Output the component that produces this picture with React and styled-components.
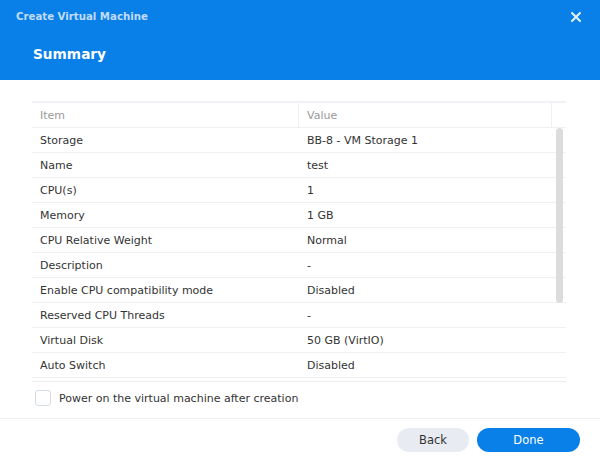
import styled, { createGlobalStyle } from "styled-components";

const Global = createGlobalStyle`
  html, body {
    margin: 0;
    padding: 0;
    background: #fff;
  }
  body {
    font-family: "DejaVu Sans", Verdana, sans-serif;
    font-size: 11px;
    color: #333;
  }
`;

const Dialog = styled.div`
  width: 600px;
  height: 458px;
  display: flex;
  flex-direction: column;
  background: #fff;
  overflow: hidden;
`;

const Header = styled.header`
  height: 80px;
  background: #0880e8;
  display: flex;
  flex-direction: column;
  box-sizing: border-box;
`;

const TitleBar = styled.div`
  display: flex;
  align-items: center;
  justify-content: space-between;
  height: 33px;
  padding: 0 18px 0 16px;
`;

const Title = styled.div`
  font-size: 10.2px;
  font-weight: bold;
  color: #c2dbf8;
`;

const Close = styled.button`
  border: 0;
  background: none;
  padding: 0;
  width: 12px;
  height: 12px;
  display: flex;
  cursor: pointer;
`;

const Heading = styled.h1`
  margin: 0;
  padding: 13px 0 0 33px;
  font-size: 13.7px;
  font-weight: bold;
  color: #fff;
`;

const Body = styled.div`
  flex: 1;
  padding: 21px 34px 0 32px;
  display: flex;
  flex-direction: column;
`;

const Grid = styled.div`
  position: relative;
  border-top: 2px solid #f0f2f5;
  border-bottom: 1px solid #e9ecf0;
  height: 281px;
  box-sizing: border-box;
`;

const Row = styled.div`
  display: grid;
  grid-template-columns: 267px 1fr 14px;
  height: 25px;
  border-bottom: 1px solid #eef0f3;
  box-sizing: border-box;
  align-items: center;
  color: ${(p) => (p.$head ? "#9a9a9a" : "#333")};
`;

const Cell = styled.div`
  padding-left: 8px;
  height: 100%;
  display: flex;
  align-items: center;
  border-right: ${(p) => (p.$head ? "1px solid #eef0f3" : "0")};
  white-space: nowrap;
`;

const Scroll = styled.div`
  position: absolute;
  right: 3px;
  top: 25px;
  width: 7px;
  height: 175px;
  border-radius: 4px;
  background: #dcdcdc;
`;

const Check = styled.label`
  display: flex;
  align-items: center;
  gap: 8px;
  margin-top: 8px;
  height: 16px;
  font-size: 11px;
  color: #333;
  padding-left: 3px;
`;

const Box = styled.span`
  width: 14px;
  height: 14px;
  border: 1px solid #d5dbe3;
  border-radius: 3px;
  background: #fff;
`;

const Footer = styled.footer`
  border-top: 1px solid #eceef2;
  height: 39px;
  display: flex;
  justify-content: flex-end;
  align-items: center;
  gap: 8px;
  padding: 0 20px 0 0;
  margin-top: 12px;
`;

const Button = styled.button`
  height: 24px;
  width: ${(p) => (p.$primary ? "103px" : "72px")};
  border-radius: 12px;
  border: 0;
  font-family: "DejaVu Sans", Verdana, sans-serif;
  font-size: 11.5px;
  background: ${(p) => (p.$primary ? "#0880e8" : "#e8ecf2")};
  color: ${(p) => (p.$primary ? "#fff" : "#333")};
  margin-top: 2px;
`;

const rows = [
  ["Storage", "BB-8 - VM Storage 1"],
  ["Name", "test"],
  ["CPU(s)", "1"],
  ["Memory", "1 GB"],
  ["CPU Relative Weight", "Normal"],
  ["Description", "-"],
  ["Enable CPU compatibility mode", "Disabled"],
  ["Reserved CPU Threads", "-"],
  ["Virtual Disk", "50 GB (VirtIO)"],
  ["Auto Switch", "Disabled"],
];

export default function App() {
  return (
    <Dialog>
      <Global />
      <Header>
        <TitleBar>
          <Title>Create Virtual Machine</Title>
          <Close aria-label="Close">
            <svg width="12" height="12" viewBox="0 0 12 12">
              <path d="M2 2L10 10M10 2L2 10" stroke="#e6f1fd" strokeWidth="2" strokeLinecap="round" />
            </svg>
          </Close>
        </TitleBar>
        <Heading>Summary</Heading>
      </Header>
      <Body>
        <Grid>
          <Row $head>
            <Cell $head>Item</Cell>
            <Cell $head>Value</Cell>
            <Cell />
          </Row>
          {rows.map(([k, v]) => (
            <Row key={k}>
              <Cell>{k}</Cell>
              <Cell>{v}</Cell>
              <Cell />
            </Row>
          ))}
          <Scroll />
        </Grid>
        <Check>
          <Box />
          Power on the virtual machine after creation
        </Check>
      </Body>
      <Footer>
        <Button>Back</Button>
        <Button $primary>Done</Button>
      </Footer>
    </Dialog>
  );
}
